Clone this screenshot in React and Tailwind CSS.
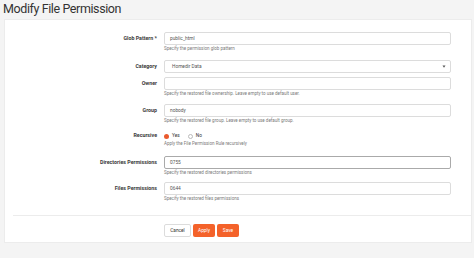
import React from "react";

function Label({ children, h = 13 }) {
  return (
    <div
      className="w-[152px] shrink-0 text-right font-bold text-[5.3px] text-[#3a3a3a] flex items-center justify-end"
      style={{ height: h }}
    >
      {children}
    </div>
  );
}

function Help({ children }) {
  return (
    <div className="mt-[1px] h-[6px] leading-[6px] text-[4.5px] text-[#7a7a7a] whitespace-nowrap">
      {children}
    </div>
  );
}

function Input({ value }) {
  return (
    <div className="w-[287px] h-[13px] border border-[#dcdcdc] rounded-[2px] bg-white flex items-center px-[5px] text-[4.8px] text-[#555]">
      {value}
    </div>
  );
}

export default function App() {
  return (
    <div
      className="w-[474px] h-[258px] bg-[#f4f4f4] overflow-hidden"
      style={{ fontFamily: "Roboto, 'Liberation Sans', sans-serif" }}
    >
      <div className="h-[19px] pl-[3px] text-[12.5px] tracking-[-0.4px] leading-[17px] text-[#333]">
        Modify File Permission
      </div>
      <div className="ml-[4px] w-[468px] h-[224px] bg-white border border-[#ececec] pt-[12px]">
        {/* Glob Pattern */}
        <div className="flex gap-[7px]">
          <Label>Glob Pattern *</Label>
          <div>
            <Input value="public_html" />
            <Help>Specify the permission glob pattern</Help>
          </div>
        </div>
        {/* Category */}
        <div className="flex gap-[7px] mt-[8px]">
          <Label>Category</Label>
          <div className="w-[287px] h-[13px] border border-[#dcdcdc] rounded-[2px] bg-white flex items-center justify-between pl-[7px] pr-[4px] text-[4.8px] text-[#555]">
            <span>Homedir Data</span>
            <svg width="4" height="3" viewBox="0 0 10 8">
              <path d="M1 1 L5 7 L9 1 Z" fill="#555" />
            </svg>
          </div>
        </div>
        {/* Owner */}
        <div className="flex gap-[7px] mt-[4px]">
          <Label>Owner</Label>
          <div>
            <Input value="" />
            <Help>Specify the restored file ownership. Leave empty to use default user.</Help>
          </div>
        </div>
        {/* Group */}
        <div className="flex gap-[7px] mt-[7px]">
          <Label>Group</Label>
          <div>
            <Input value="nobody" />
            <Help>Specify the restored file group. Leave empty to use default group.</Help>
          </div>
        </div>
        {/* Recursive */}
        <div className="flex gap-[7px] mt-[8px]">
          <Label h={8}>Recursive</Label>
          <div>
            <div className="h-[8px] flex items-center text-[4.8px] text-[#333]">
              <span className="w-[5px] h-[5px] rounded-full bg-[#ea5a2e] mr-[3px]" />
              <span className="mr-[8px]">Yes</span>
              <span className="w-[5px] h-[5px] rounded-full border border-[#bbb] mr-[3px]" />
              <span>No</span>
            </div>
            <Help>Apply the File Permission Rule recursively</Help>
          </div>
        </div>
        {/* Directories Permissions */}
        <div className="flex gap-[7px] mt-[9px]">
          <Label>Directories Permissions</Label>
          <div>
            <div className="w-[287px] h-[13px] border border-[#aaa] rounded-[2px] bg-white flex items-center px-[5px] text-[4.8px] text-[#555]">
              0755
            </div>
            <Help>Specify the restored directories permissions</Help>
          </div>
        </div>
        {/* Files Permissions */}
        <div className="flex gap-[7px] mt-[6px]">
          <Label>Files Permissions</Label>
          <div>
            <Input value="0644" />
            <Help>Specify the restored files permissions</Help>
          </div>
        </div>
        {/* Footer */}
        <div className="mt-[13px] ml-[8px] border-t border-[#ececec] pt-[8px] pl-[151px] flex gap-[2px]">
          <div className="w-[27px] h-[13px] border border-[#dcdcdc] rounded-[2px] bg-white flex items-center justify-center text-[4.8px] text-[#333]">
            Cancel
          </div>
          <div className="w-[22px] h-[13px] rounded-[2px] bg-[#f4622a] flex items-center justify-center text-[4.8px] text-white">
            Apply
          </div>
          <div className="w-[22px] h-[13px] rounded-[2px] bg-[#f4622a] flex items-center justify-center text-[4.8px] text-white">
            Save
          </div>
        </div>
      </div>
    </div>
  );
}
